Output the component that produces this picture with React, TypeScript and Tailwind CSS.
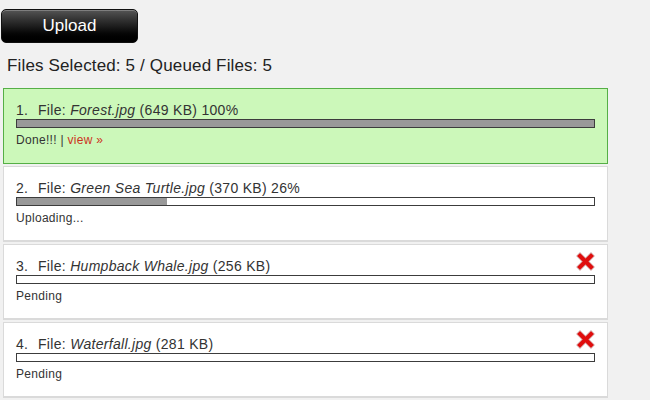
// Upload queue: button, counters and one card per file

type Item = {
  name: string;
  size: number;
  progress: number | null;
  status: 'done' | 'uploading' | 'pending';
};

const items: Item[] = [
  { name: 'Forest.jpg', size: 649, progress: 100, status: 'done' },
  { name: 'Green Sea Turtle.jpg', size: 370, progress: 26, status: 'uploading' },
  { name: 'Humpback Whale.jpg', size: 256, progress: null, status: 'pending' },
  { name: 'Waterfall.jpg', size: 281, progress: null, status: 'pending' },
];

function RemoveIcon() {
  return (
    <svg width="19" height="19" viewBox="0 0 19 19">
      <g strokeLinecap="square">
        <path d="M4 4 L15 15 M15 4 L4 15" stroke="#8a1010" strokeWidth="5.6" opacity="0.35" />
        <path d="M4 4 L15 15 M15 4 L4 15" stroke="#e00d0d" strokeWidth="4" />
      </g>
    </svg>
  );
}

function FileCard({ item, index }: { item: Item; index: number }) {
  const done = item.status === 'done';
  return (
    <div
      className={
        done
          ? 'relative mb-[2px] h-[76px] border border-[#55af46] bg-[#ccf8ba] px-3 pt-[13px]'
          : 'relative mb-[2px] h-[76px] border border-[#dadada] border-b-2 bg-white px-3 pt-[13px]'
      }
    >
      {item.status === 'pending' && (
        <button className="absolute right-3 top-[7px]">
          <RemoveIcon />
        </button>
      )}
      <div className="text-[14px] leading-[17px] tracking-[0.3px] text-[#333]">
        <span className="inline-block w-[22px]">{index + 1}.</span>
        File: <i>{item.name}</i> ({item.size} KB){item.progress !== null && ` ${item.progress}%`}
      </div>
      <div className="h-[9px] border border-[#3c3c3c] bg-white">
        {item.progress !== null && (
          <div className="h-full bg-[#999]" style={{ width: `${item.progress}%` }} />
        )}
      </div>
      <div className="mt-[5px] text-[12px] leading-[14px] tracking-[0.3px] text-[#333]">
        {item.status === 'done' && (
          <>
            Done!!! | <a className="text-[#cc3322]">view »</a>
          </>
        )}
        {item.status === 'uploading' && 'Uploading...'}
        {item.status === 'pending' && 'Pending'}
      </div>
    </div>
  );
}

export default function App() {
  return (
    <div
      className="h-[400px] w-[650px] overflow-hidden bg-[#f1f1f1] pl-px pt-[9px]"
      style={{ fontFamily: '"Liberation Sans", Arial, sans-serif' }}
    >
      <button className="h-[34px] w-[137px] rounded-[5px] border border-[#111] bg-gradient-to-b from-[#555] via-[#1e1e1e] to-[#000] text-[17px] text-white shadow-[inset_0_1px_0_rgba(255,255,255,0.25)]">
        Upload
      </button>
      <div className="mt-[12px] pl-[6px] text-[17px] leading-[21px] tracking-[0.15px] text-[#222]">
        Files Selected: 5 / Queued Files: 5
      </div>
      <div className="mt-[12px] w-[605px] pl-[2px] box-content">
        {items.map((item, i) => (
          <FileCard key={item.name} item={item} index={i} />
        ))}
      </div>
    </div>
  );
}
